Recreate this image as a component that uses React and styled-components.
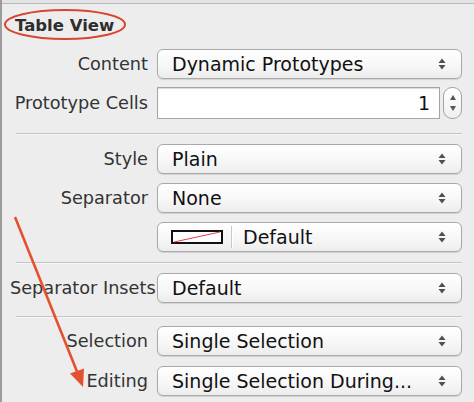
import React from 'react'
import styled, { createGlobalStyle } from 'styled-components'

const GlobalStyle = createGlobalStyle`
  html, body {
    margin: 0;
    padding: 0;
    background: #ededed;
  }
  body {
    font-family: "DejaVu Sans", "Liberation Sans", sans-serif;
  }
`;

const Panel = styled.div`
  position: relative;
  width: 474px;
  height: 402px;
  box-sizing: border-box;
  border-left: 2px solid #9c9c9c;
  background: #ededed;
  overflow: hidden;
`;

const TopRule = styled.div`
  height: 3px;
  border-bottom: 1px solid #b9b9b9;
  background: #e4e4e4;
`;

const Header = styled.div`
  height: 45px;
  display: flex;
  align-items: center;
  padding-left: 13px;
  font-size: 16.5px;
  font-weight: bold;
  color: #2e2e2e;
  padding-bottom: 3px;
  box-sizing: border-box;
`;

const Section = styled.div`
  display: grid;
  grid-template-columns: 138px 1fr;
  column-gap: 9px;
  row-gap: ${p => p.$gap || 9}px;
  padding: ${p => p.$top || 0}px 12px ${p => p.$bottom || 0}px 8px;
  align-items: center;
`;

const Rule = styled.div`
  height: 1px;
  background: #c4c4c4;
  margin: 0 12px 0 14px;
  border-bottom: 1px solid #f7f7f7;
`;

const Label = styled.div`
  text-align: right;
  font-size: 17.7px;
  color: #333;
  white-space: nowrap;
`;

const Select = styled.div`
  height: ${p => p.$h || 30}px;
  box-sizing: border-box;
  display: flex;
  align-items: center;
  padding: 0 14px 0 14px;
  border: 1px solid #a9a9a9;
  border-radius: 6px;
  background: linear-gradient(#ffffff, #f6f6f6 60%, #ededed);
  box-shadow: 0 1px 1px rgba(0, 0, 0, 0.12);
  font-size: 19px;
  color: #111;
  white-space: nowrap;
`;

const SelectText = styled.span`
  flex: 1;
  overflow: hidden;
`;

const Chevrons = styled.svg`
  width: 8px;
  height: 12px;
  flex: none;
  margin-right: 1px;
`;

const UpDown = () => (
  <Chevrons viewBox="0 0 8 12">
    <path d="M4 0.5 L7.5 5 L0.5 5 Z" fill="#505050" />
    <path d="M4 11.5 L7.5 7 L0.5 7 Z" fill="#505050" />
  </Chevrons>
);

const FieldRow = styled.div`
  display: flex;
  align-items: center;
  gap: 3px;
`;

const TextField = styled.div`
  flex: 1;
  height: 32px;
  box-sizing: border-box;
  background: #fff;
  border: 1px solid #a5a5a5;
  box-shadow: inset 0 1px 1px rgba(0, 0, 0, 0.15);
  display: flex;
  align-items: center;
  justify-content: flex-end;
  padding-right: 9px;
  font-size: 19px;
  color: #111;
`;

const Stepper = styled.div`
  width: 19px;
  height: 32px;
  box-sizing: border-box;
  border: 1px solid #a3a3a3;
  border-radius: 9px;
  background: linear-gradient(#ffffff, #efefef);
  display: flex;
  flex-direction: column;
  align-items: center;
  justify-content: center;
  gap: 6px;
`;

const Tri = styled.div`
  width: 0;
  height: 0;
  border-left: 3.5px solid transparent;
  border-right: 3.5px solid transparent;
  ${p => (p.$down ? 'border-top: 5px solid #555;' : 'border-bottom: 5px solid #555;')}
`;

const Swatch = styled.svg`
  width: 52px;
  height: 14px;
  flex: none;
  margin-left: -1px;
`;

const Divider = styled.div`
  width: 1px;
  align-self: stretch;
  margin: 3px 11px 3px 8px;
  background: #c8c8c8;
  box-shadow: 1px 0 0 #fff;
`;

const Overlay = styled.svg`
  position: absolute;
  left: -2px;
  top: 0;
  width: 474px;
  height: 402px;
  pointer-events: none;
`;

const Picker = ({ children }) => (
  <Select>
    <SelectText>{children}</SelectText>
    <UpDown />
  </Select>
);

export default function App() {
  return (
    <>
      <GlobalStyle />
      <Panel>
        <TopRule />
        <Header>Table View</Header>

        <Section $bottom={14} $gap={8}>
          <Label>Content</Label>
          <Picker>Dynamic Prototypes</Picker>
          <Label>Prototype Cells</Label>
          <FieldRow>
            <TextField>1</TextField>
            <Stepper>
              <Tri />
              <Tri $down />
            </Stepper>
          </FieldRow>
        </Section>
        <Rule />

        <Section $top={9} $bottom={10}>
          <Label>Style</Label>
          <Picker>Plain</Picker>
          <Label>Separator</Label>
          <Picker>None</Picker>
          <div />
          <Select>
            <Swatch viewBox="0 0 52 14">
              <rect x="1" y="1" width="50" height="12" fill="#fff" stroke="#111" strokeWidth="2" />
              <line x1="3" y1="12" x2="49" y2="2" stroke="#e0404a" strokeWidth="1" />
            </Swatch>
            <Divider />
            <SelectText>Default</SelectText>
            <UpDown />
          </Select>
        </Section>
        <Rule />

        <Section $top={9} $bottom={13}>
          <Label>Separator Insets</Label>
          <Picker>Default</Picker>
        </Section>
        <Rule />

        <Section $top={8} $gap={10}>
          <Label>Selection</Label>
          <Picker>Single Selection</Picker>
          <Label>Editing</Label>
          <Picker>Single Selection During...</Picker>
        </Section>

        <Overlay viewBox="0 0 474 402">
          <ellipse cx="65" cy="24.5" rx="60" ry="14.5" fill="none" stroke="#d9442f" strokeWidth="2" />
          <line x1="15" y1="217" x2="78" y2="374" stroke="#e5502f" strokeWidth="2.6" />
          <polygon points="83,387 70,373.5 84,368.5" fill="#e5502f" />
        </Overlay>
      </Panel>
    </>
  )
}
